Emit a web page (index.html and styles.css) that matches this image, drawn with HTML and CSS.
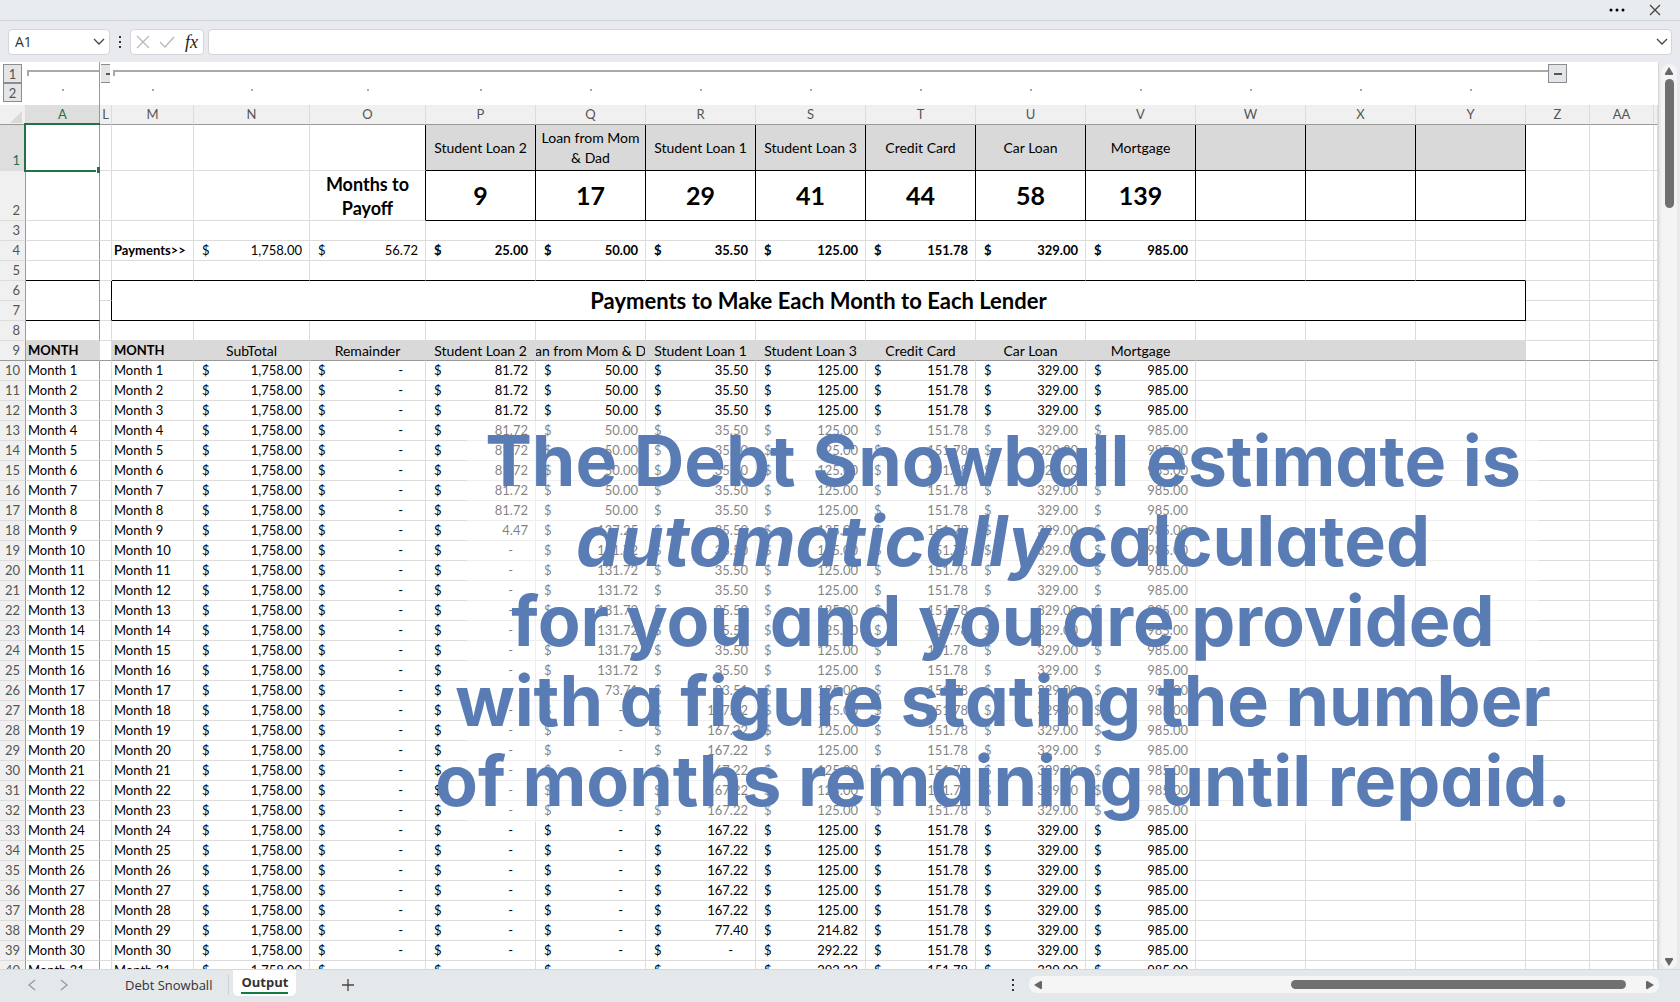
FILE: index.html
```
<!DOCTYPE html>
<html lang="en">
<head>
    <meta charset="UTF-8">
    <meta name="viewport" content="width=device-width, initial-scale=1.0">
    <title>Debt Snowball - Output</title>
    <link rel="stylesheet" href="styles.css">
</head>
<body>
    <div class="titlebar">
        <button type="button" class="icon-btn" aria-label="More options">
            <svg width="16" height="16" viewBox="0 0 16 16"><circle cx="2" cy="8" r="1.5"/><circle cx="8" cy="8" r="1.5"/><circle cx="14" cy="8" r="1.5"/></svg>
        </button>
        <button type="button" class="icon-btn" aria-label="Close">
            <svg width="12" height="12" viewBox="0 0 12 12"><path d="M1 1l10 10M11 1L1 11"/></svg>
        </button>
    </div>

    <div class="formula-bar">
        <div class="box name-box">
            <input type="text" value="A1" aria-label="Name box">
            <button type="button" class="icon-btn" aria-label="Open name list">
                <svg width="12" height="8" viewBox="0 0 12 8"><path d="M1 1l5 5 5-5"/></svg>
            </button>
        </div>
        <svg class="grip" width="4" height="14" viewBox="0 0 4 14"><path d="M1 1h2v2H1zM1 6h2v2H1zM1 11h2v2H1z"/></svg>
        <div class="box fx-box">
            <button type="button" class="icon-btn muted" aria-label="Cancel">
                <svg width="14" height="14" viewBox="0 0 14 14"><path d="M1 1l12 12M13 1L1 13"/></svg>
            </button>
            <button type="button" class="icon-btn muted" aria-label="Enter">
                <svg width="16" height="12" viewBox="0 0 16 12"><path d="M1 6l5 5L15 1"/></svg>
            </button>
            <button type="button" class="fx" aria-label="Insert function"><i>f</i>x</button>
        </div>
        <div class="box formula-box">
            <input type="text" aria-label="Formula">
            <button type="button" class="icon-btn" aria-label="Expand formula bar">
                <svg width="12" height="8" viewBox="0 0 12 8"><path d="M1 1l5 5 5-5"/></svg>
            </button>
        </div>
    </div>

    <div class="workspace">
        <div class="sheet">
            <div class="outline">
                <div class="levels">
                    <button type="button">1</button>
                    <button type="button">2</button>
                </div>
                <div class="frozen"><div class="group"></div></div>
                <button type="button" class="collapse cut" aria-label="Collapse columns B to K"></button>
                <div class="group group-m"></div>
                <button type="button" class="collapse" aria-label="Collapse columns M to Y"></button>
            </div>
            <table class="grid">
                <colgroup id="cols"></colgroup>
                <thead><tr id="letters"></tr></thead>
                <tbody id="rows"></tbody>
            </table>
            <div class="caption">
                <span>The Debt Snowball estimate is</span>
                <span><em>automatically</em> calculated</span>
                <span>for you and you are provided</span>
                <span>with a figure stating the number</span>
                <span>of months remaining until repaid.</span>
            </div>
        </div>
        <div class="vscroll">
            <svg width="10" height="8" viewBox="0 0 10 8"><path d="M5 0l4 6.500q.5 1.500-1 1.500H2Q.5 8 1 6.500z"/></svg>
            <div class="thumb"></div>
            <svg class="last" width="10" height="8" viewBox="0 0 10 8"><path d="M5 8l4-6.500Q9.500 0 8 0H2Q.5 0 1 1.500z"/></svg>
        </div>
    </div>

    <div class="tabbar">
        <button type="button" class="icon-btn nav" aria-label="Previous sheet">
            <svg width="8" height="12" viewBox="0 0 8 12"><path d="M7 1L1 6l6 5"/></svg>
        </button>
        <button type="button" class="icon-btn nav" aria-label="Next sheet">
            <svg width="8" height="12" viewBox="0 0 8 12"><path d="M1 1l6 5-6 5"/></svg>
        </button>
        <button type="button" class="tab">Debt Snowball</button>
        <button type="button" class="tab active"><span>Output</span></button>
        <button type="button" class="icon-btn add" aria-label="New sheet">
            <svg width="12" height="12" viewBox="0 0 12 12"><path d="M6 0v12M0 6h12"/></svg>
        </button>
        <svg class="grip" width="4" height="14" viewBox="0 0 4 14"><path d="M1 1h2v2H1zM1 6h2v2H1zM1 11h2v2H1z"/></svg>
        <div class="hscroll">
            <svg width="8" height="10" viewBox="0 0 8 10"><path d="M0 5l6.500-4Q8 .5 8 2v6q0 1.500-1.500 1z"/></svg>
            <div class="thumb"></div>
            <svg width="8" height="10" viewBox="0 0 8 10"><path d="M8 5L1.500 1Q0 .5 0 2v6q0 1.500 1.500 1z"/></svg>
        </div>
    </div>

    <script src="script.js"></script>
</body>
</html>
```
FILE: styles.css
```
* {
    box-sizing: border-box;
}

body {
    margin: 0;
    height: 100vh;
    display: flex;
    flex-direction: column;
    overflow: hidden;
    background-color: #e9eaef;
    color: #000;
    font-family: Lato, "Liberation Sans", sans-serif;
    font-size: 13px;
}

button,
input {
    font: inherit;
    color: inherit;
    border: none;
    background: none;
    padding: 0;
    outline: none;
}

svg {
    display: block;
    flex: none;
}

.icon-btn {
    display: flex;
    align-items: center;
    justify-content: center;
}

.icon-btn path {
    fill: none;
    stroke: #444;
    stroke-width: 1.3;
}

/* title and formula bars */
.titlebar {
    height: 21px;
    flex: none;
    display: flex;
    justify-content: flex-end;
    align-items: center;
    gap: 24px;
    padding-right: 19px;
    background-color: #e9ecef;
    border-bottom: 1px solid #cfd4d6;
}

.formula-bar {
    height: 41px;
    flex: none;
    display: flex;
    align-items: center;
    padding: 0 8px;
}

.box {
    height: 26px;
    display: flex;
    align-items: center;
    background-color: #fff;
    border: 1px solid #d3d5d8;
    border-radius: 4px;
}

.box input {
    flex: 1;
    min-width: 0;
    font-family: "Open Sans", sans-serif;
    font-size: 14px;
    color: #333;
}

.name-box {
    width: 102px;
    padding: 0 4px 0 6px;
}

.grip {
    margin: 0 8px;
    fill: #333;
}

.fx-box {
    width: 74px;
    margin-right: 4px;
    padding: 0 5px;
    justify-content: space-between;
}

.muted path {
    stroke: #b9b9b9;
}

.fx {
    font-family: "Liberation Serif", serif;
    font-size: 18px;
    font-style: italic;
    line-height: 20px;
    color: #222;
}

.formula-box {
    flex: 1;
    padding: 0 3px;
}

/* outline strip */
.workspace {
    flex: 1;
    min-height: 0;
    display: flex;
}

.sheet {
    position: relative;
    flex: 1;
    min-width: 0;
    overflow: hidden;
    background-color: #fff;
    border-right: 1px solid #d4d4d4;
}

.outline {
    height: 43px;
    display: flex;
}

.levels {
    width: 26px;
    padding: 2px 0 0 3px;
    display: flex;
    flex-direction: column;
}

.levels button,
.collapse {
    width: 19px;
    height: 19px;
    border: 1px solid #8a8d91;
    background-color: #e4e5e7;
    color: #555;
    line-height: 16px;
}

.frozen {
    width: 74px;
    padding-left: 1px;
    border-right: 1px solid #999;
}

.group {
    height: 6px;
    margin-top: 8px;
    border-top: 2px solid #a9a9a9;
    border-left: 2px solid #a9a9a9;
}

.group-m {
    width: 1435px;
    margin-left: 3px;
}

.collapse {
    display: flex;
    align-items: center;
    justify-content: center;
    margin-top: 2px;
}

.collapse::before {
    content: "";
    width: 8px;
    height: 2px;
    background-color: #555;
}

.cut {
    width: 9px;
    margin-left: 1px;
    border-width: 1px 0;
    justify-content: flex-end;
}

.cut::before {
    width: 4px;
}

/* grid */
.grid {
    width: 100%;
    table-layout: fixed;
    border-collapse: separate;
    border-spacing: 0;
}

.grid th,
.grid td {
    height: 20px;
    padding: 0;
    border-right: 1px solid #dcdcdc;
    border-bottom: 1px solid #dcdcdc;
    line-height: 19px;
    white-space: nowrap;
    overflow: hidden;
}

.grid th {
    font-weight: normal;
    color: #555;
    background-color: #f0f0f0;
}

.grid thead th {
    position: relative;
    overflow: visible;
    border-bottom-color: #999;
}

.grid tbody th {
    text-align: right;
    padding-right: 5px;
    vertical-align: bottom;
    border-right-color: #999;
}

.grid th.picked {
    color: #217346;
    background-color: #dedede;
}

.corner svg {
    margin: 4px 3px 0 auto;
    fill: #dadada;
}

.grid .col-A {
    border-right-color: #999;
}

.grid .row-1 > * {
    height: 46px;
}

.grid .row-2 > * {
    height: 50px;
}

.grid .label {
    padding-left: 2px;
}

.grid .bold {
    font-weight: bold;
}

.grid .center {
    text-align: center;
}

.money {
    display: flex;
    justify-content: space-between;
    padding: 0 7px 0 8px;
}

.money.zero {
    padding-right: 22px;
}

.grid .lender {
    font-size: 14px;
    line-height: 20px;
    white-space: normal;
    background-color: #d9d9d9;
    border-color: #000;
}

.grid .payoff {
    font-size: 25px;
    font-weight: bold;
    border-color: #000;
}

.grid .edge {
    border-right-color: #000;
}

.grid .payoff-label {
    font-size: 18px;
    font-weight: bold;
    line-height: 24px;
    white-space: normal;
}

.grid .line {
    border-bottom-color: #000;
}

.grid .banner {
    font-size: 22px;
    font-weight: bold;
    border-color: #000;
}

.grid .head {
    background-color: #d9d9d9;
    border-right-color: #d9d9d9;
}

.grid .head.center {
    font-size: 14px;
}

.grid .row-9 > * {
    border-bottom-color: #999;
}

.clip {
    display: flex;
    justify-content: center;
}

.grid .selected {
    position: relative;
    overflow: visible;
}

.selected::before {
    content: "";
    position: absolute;
    inset: -2px -1px -2px -2px;
    border: 2px solid #217346;
    border-right: none;
}

.selected::after {
    content: "";
    position: absolute;
    right: -1px;
    bottom: -3px;
    width: 3px;
    height: 6px;
    background-color: #217346;
    border-left: 1px solid #fff;
}

.dot {
    position: absolute;
    top: -16px;
    left: calc(50% - 1px);
    width: 2px;
    height: 2px;
    background-color: #aaa;
}

/* caption laid over the rows */
.caption {
    position: absolute;
    top: 359px;
    left: 467px;
    width: 1072px;
    height: 401px;
    display: flex;
    flex-direction: column;
    align-items: center;
    background-color: rgba(255, 255, 255, 0.5);
    color: #5a7cb5;
    font-family: Inter, sans-serif;
    font-size: 70px;
    font-weight: bold;
    font-feature-settings: "cv11";
    line-height: 80px;
    white-space: nowrap;
}

/* scroll bars and tabs */
.thumb {
    border-radius: 5px;
    background-color: #707070;
}

.vscroll {
    width: 16px;
    margin: 2px 3px 0 2px;
    padding: 3px 0;
    display: flex;
    flex-direction: column;
    align-items: center;
    gap: 4px;
    border-radius: 8px;
    background-color: #f4f4f4;
    fill: #666;
}

.vscroll .thumb {
    width: 9px;
    height: 129px;
}

.vscroll .last {
    margin-top: auto;
}

.tabbar {
    height: 33px;
    flex: none;
    display: flex;
    align-items: center;
    padding: 0 21px 3px 0;
    background-color: #e4e8eb;
    border-top: 1px solid #d5d8da;
    font-family: "Open Sans", sans-serif;
    color: #333;
}

.nav {
    width: 32px;
}

.nav:first-child {
    margin-left: 16px;
}

.nav path {
    stroke: #999;
}

.tab {
    padding: 0 16px 0 15px;
    margin-left: 30px;
    border-right: 1px solid #cdd0d3;
    line-height: 20px;
}

.tab.active {
    align-self: flex-start;
    height: 26px;
    margin-left: 4px;
    padding: 1px 8px;
    border: none;
    border-radius: 0 0 5px 5px;
    background-color: #fff;
    font-weight: bold;
}

.tab.active span {
    display: block;
    border-bottom: 2px solid #107c41;
}

.add {
    margin-left: 46px;
}

.tabbar .grip {
    margin: 0 14px 0 auto;
}

.hscroll {
    width: 38%;
    height: 17px;
    display: flex;
    align-items: center;
    justify-content: flex-end;
    gap: 20px;
    padding: 0 5px;
    border-radius: 8px;
    background-color: #f5f5f5;
    fill: #666;
}

.hscroll svg:first-child {
    margin-right: auto;
}

.hscroll .thumb {
    width: 335px;
    height: 9px;
}
```
FILE: script.js
```
const columns = [
    ["A", 74], ["L", 12], ["M", 82], ["N", 116], ["O", 116],
    ["P", 110], ["Q", 110], ["R", 110], ["S", 110], ["T", 110],
    ["U", 110], ["V", 110], ["W", 110], ["X", 110], ["Y", 110],
    ["Z", 64], ["AA", 64], ["", 0]
];
const lenders = ["Student Loan 2", "Loan from Mom & Dad", "Student Loan 1", "Student Loan 3", "Credit Card", "Car Loan", "Mortgage"];
const payoff = [9, 17, 29, 41, 44, 58, 139];
const payments = ["1,758.00", "56.72", "25.00", "50.00", "35.50", "125.00", "151.78", "329.00", "985.00"];
const lenderCols = [..."PQRSTUVWXY"];
const moneyCols = [..."NOPQRSTUV"];
const usedCols = [..."AMNO", ...lenderCols];

// amounts paid in a given month, columns N to V
function amounts(month) {
    let p = "-", q = "-", r = "-", s = "125.00";
    if (month < 9) p = "81.72";
    if (month === 9) p = "4.47";
    if (month < 9) q = "50.00";
    else if (month === 9) q = "127.25";
    else if (month < 17) q = "131.72";
    else if (month === 17) q = "73.71";
    if (month < 17) r = "35.50";
    else if (month === 17) r = "93.51";
    else if (month < 29) r = "167.22";
    else if (month === 29) r = "77.40";
    if (month === 29) s = "214.82";
    if (month > 29) s = "292.22";
    return ["1,758.00", "-", p, q, r, s, "151.78", "329.00", "985.00"];
}

function money(value) {
    const zero = value === "-" ? " zero" : "";
    return `<div class="money${zero}"><span>$</span><span>${value}</span></div>`;
}

function lenderName(i) {
    return (lenders[i] || "").replace("&", "&amp;");
}

function cell(row, col) {
    const i = lenderCols.indexOf(col);
    const n = moneyCols.indexOf(col);
    let css = "", html = "";

    if (row === 1 && col === "A") css = "selected";
    if (row === 1 && col === "O") css = "edge";
    if (row === 1 && i >= 0) {
        css = "lender center";
        html = lenderName(i);
    }
    if (row === 2 && col === "O") {
        css = "edge center payoff-label";
        html = "Months to Payoff";
    }
    if (row === 2 && i >= 0) {
        css = "payoff center";
        html = payoff[i] || "";
    }
    if (row === 4 && col === "M") {
        css = "label bold";
        html = "Payments&gt;&gt;";
    }
    if (row === 4 && n >= 0) {
        css = n > 1 ? "bold" : "";
        html = money(payments[n]);
    }
    if (row === 5 && usedCols.includes(col)) css = "line";
    if ((row === 6 || row === 7) && col === "L") css = "edge";
    if (row === 9 && usedCols.includes(col)) {
        css = "head center";
        if (col === "A" || col === "M") {
            css = "head label bold";
            html = "MONTH";
        }
        if (col === "N") html = "SubTotal";
        if (col === "O") html = "Remainder";
        if (i >= 0) html = `<div class="clip">${lenderName(i)}</div>`;
    }
    if (row >= 10) {
        if (col === "A" || col === "M") {
            css = "label";
            html = "Month " + (row - 9);
        }
        if (n >= 0) html = money(amounts(row - 9)[n]);
    }
    return `<td class="col-${col} ${css}">${html}</td>`;
}

document.getElementById("cols").innerHTML = '<col style="width: 26px">' +
    columns.map(([, width]) => width ? `<col style="width: ${width}px">` : "<col>").join("");

const corner = '<th class="corner"><svg width="12" height="12" viewBox="0 0 12 12"><path d="M12 0v12H0z"/></svg></th>';
document.getElementById("letters").innerHTML = corner + columns.map(([col]) => {
    const dot = usedCols.includes(col) ? '<span class="dot"></span>' : "";
    return `<th class="col-${col}${col === "A" ? " picked" : ""}">${col}${dot}</th>`;
}).join("");

let body = "";
for (let row = 1; row <= 40; row++) {
    body += `<tr class="row-${row}"><th class="${row === 1 ? "picked" : ""}">${row}</th>`;
    for (const [col] of columns) {
        // rows 6 and 7 are merged in column A and from M to Y
        if (row === 6 && col === "A") {
            body += '<td class="col-A line" rowspan="2"></td>';
        } else if (row === 6 && col === "M") {
            body += '<td class="banner center" rowspan="2" colspan="13">Payments to Make Each Month to Each Lender</td>';
        } else if ((row === 6 || row === 7) && usedCols.includes(col)) {
            continue;
        } else {
            body += cell(row, col);
        }
    }
    body += "</tr>";
}
document.getElementById("rows").innerHTML = body;
```
